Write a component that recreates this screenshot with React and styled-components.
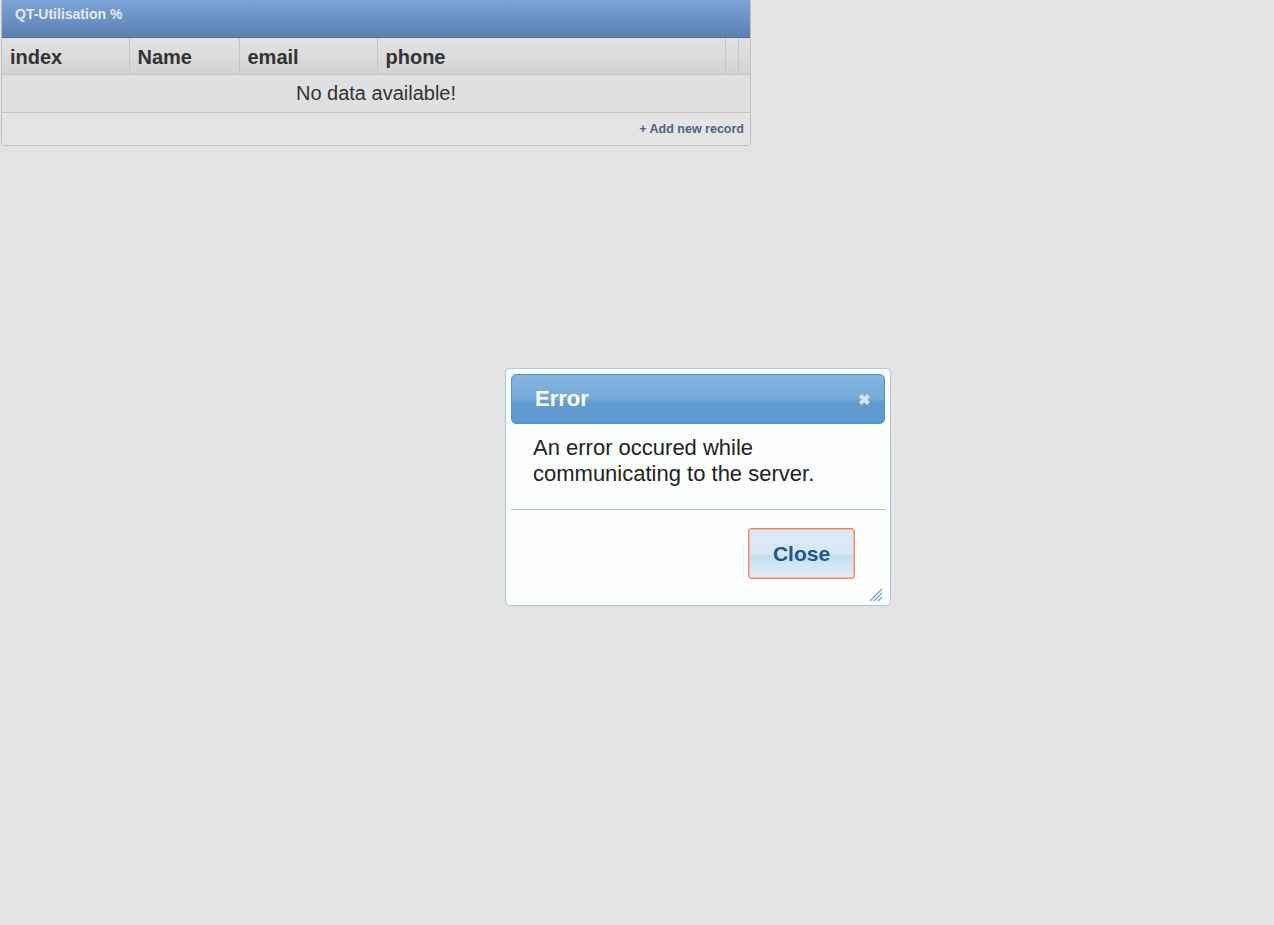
import React from "react";
import styled, { createGlobalStyle } from "styled-components";

const Global = createGlobalStyle`
  html, body { margin: 0; padding: 0; background: #e3e3e3; height: 100%; }
  body { font-family: "Liberation Sans", Arial, sans-serif; }
  #root { min-height: 925px; position: relative; }
`;

const Panel = styled.div`
  position: absolute;
  left: 1px;
  top: 0;
  width: 748px;
  border: 1px solid #c2c2c2;
  border-top: none;
  border-radius: 0 0 4px 4px;
  background: #e4e4e4;
  overflow: hidden;
`;

const TitleBar = styled.div`
  height: 38px;
  box-sizing: border-box;
  background: linear-gradient(#7ba4d8, #5c81b3);
  border-bottom: 1px solid #4e6f9c;
  color: #e6e9ee;
  font-size: 14px;
  font-weight: bold;
  padding: 6px 0 0 13px;
`;

const Table = styled.table`
  width: 100%;
  border-collapse: collapse;
  table-layout: fixed;
`;

const Th = styled.th`
  height: 36px;
  box-sizing: border-box;
  background: linear-gradient(#e2e2e2, #d3d3d3);
  border-right: 1px solid #c6c6c6;
  border-bottom: 1px solid #c2c2c2;
  text-align: left;
  padding: 3px 0 0 8px;
  font-size: 20px;
  font-weight: bold;
  color: #333;
  &:last-child { border-right: none; }
`;

const EmptyCell = styled.td`
  height: 38px;
  box-sizing: border-box;
  text-align: center;
  font-size: 20px;
  color: #333;
  background: #e0e0e0;
  border-bottom: 1px solid #c2c2c2;
`;

const Footer = styled.div`
  height: 32px;
  display: flex;
  align-items: center;
  justify-content: flex-end;
  padding-right: 6px;
  background: #e4e4e4;
`;

const AddLink = styled.a`
  font-size: 12.5px;
  font-weight: bold;
  color: #4d6386;
  text-decoration: none;
  padding-top: 1px;
`;

const Dialog = styled.div`
  position: absolute;
  left: 505px;
  top: 368px;
  width: 386px;
  height: 238px;
  box-sizing: border-box;
  background: #fcfefd;
  border: 1px solid #a6c9e2;
  border-radius: 5px;
  padding: 5px 5px 0 5px;
  display: flex;
  flex-direction: column;
`;

const DialogTitle = styled.div`
  height: 50px;
  box-sizing: border-box;
  border: 1px solid #4d93cd;
  border-radius: 5px;
  background: linear-gradient(#83b4df 0%, #77aad9 50%, #629ccf 56%, #5d98cd 100%);
  display: flex;
  align-items: center;
  justify-content: space-between;
  padding: 0 13px 0 23px;
  color: #fff;
  font-size: 22px;
  font-weight: bold;
`;

const CloseX = styled.span`
  font-size: 15px;
  color: #d6e4f2;
  margin-top: 2px;
`;

const Content = styled.div`
  padding: 11px 22px 0 22px;
  height: 74px;
  font-size: 22px;
  line-height: 26px;
  color: #222;
  border-bottom: 1px solid #a6c4d9;
`;

const ButtonPane = styled.div`
  display: flex;
  justify-content: flex-end;
  padding: 18px 30px 0 0;
  position: relative;
  flex: 1;
`;

const Button = styled.button`
  width: 107px;
  height: 51px;
  border: 1px solid #f08a64;
  border-radius: 3px;
  background: linear-gradient(#dde9f6 0%, #d6e7f6 50%, #c5ddf2 55%, #e4eff9 100%);
  color: #1d5987;
  font-family: "Liberation Sans", Arial, sans-serif;
  font-size: 21px;
  font-weight: bold;
  box-shadow: inset 0 0 0 1px #f6b79c;
  cursor: pointer;
`;

const Grip = styled.svg`
  position: absolute;
  right: 2px;
  bottom: 3px;
`;

export default function App() {
  return (
    <>
      <Global />
      <Panel>
        <TitleBar>QT-Utilisation %</TitleBar>
        <Table>
          <colgroup>
            <col style={{ width: 127 }} />
            <col style={{ width: 110 }} />
            <col style={{ width: 138 }} />
            <col style={{ width: 348 }} />
            <col style={{ width: 13 }} />
            <col style={{ width: 12 }} />
          </colgroup>
          <thead>
            <tr>
              <Th>index</Th>
              <Th>Name</Th>
              <Th>email</Th>
              <Th>phone</Th>
              <Th />
              <Th />
            </tr>
          </thead>
          <tbody>
            <tr>
              <EmptyCell colSpan={6}>No data available!</EmptyCell>
            </tr>
          </tbody>
        </Table>
        <Footer>
          <AddLink href="#">+ Add new record</AddLink>
        </Footer>
      </Panel>
      <Dialog>
        <DialogTitle>
          <span>Error</span>
          <CloseX>✖</CloseX>
        </DialogTitle>
        <Content>An error occured while communicating to the server.</Content>
        <ButtonPane>
          <Button>Close</Button>
          <Grip width="14" height="14" viewBox="0 0 14 14">
            <g stroke="#6fa5d8" strokeWidth="1.2">
              <line x1="1" y1="13" x2="13" y2="1" />
              <line x1="5" y1="13" x2="13" y2="5" />
              <line x1="9" y1="13" x2="13" y2="9" />
            </g>
          </Grip>
        </ButtonPane>
      </Dialog>
    </>
  );
}
